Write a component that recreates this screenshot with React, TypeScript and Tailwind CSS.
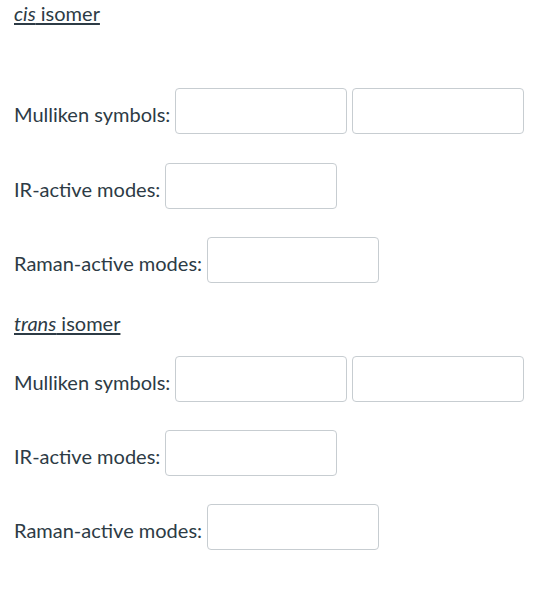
import type { ReactNode } from "react";

function Blank() {
  return (
    <input
      type="text"
      aria-label="answer"
      className="h-[46px] w-[172px] rounded-[4px] border border-[#c7cdd1] bg-white"
    />
  );
}

function Row({ label, children }: { label: string; children: ReactNode }) {
  return (
    <div className="flex h-[46px] items-center gap-[5px]">
      <span className="pt-[6px]">{label}</span>
      {children}
    </div>
  );
}

function Isomer({ name }: { name: string }) {
  return (
    <div className="leading-[27px]">
      <span className="underline decoration-[1.5px] underline-offset-[2px]">
        <em>{name}</em> isomer
      </span>
    </div>
  );
}

export default function App() {
  return (
    <div className="min-h-[593px] w-[558px] bg-white pl-[14px] text-[20px] text-[#2d3b45] [font-family:Lato,'Open_Sans',sans-serif]">
      <Isomer name="cis" />
      <div className="mt-[61px] flex flex-col gap-[28.5px]">
        <Row label="Mulliken symbols:">
          <Blank />
          <Blank />
        </Row>
        <Row label="IR-active modes:">
          <Blank />
        </Row>
        <Row label="Raman-active modes:">
          <Blank />
        </Row>
      </div>
      <div className="mt-[27px]">
        <Isomer name="trans" />
      </div>
      <div className="mt-[19px] flex flex-col gap-[28px]">
        <Row label="Mulliken symbols:">
          <Blank />
          <Blank />
        </Row>
        <Row label="IR-active modes:">
          <Blank />
        </Row>
        <Row label="Raman-active modes:">
          <Blank />
        </Row>
      </div>
    </div>
  );
}
